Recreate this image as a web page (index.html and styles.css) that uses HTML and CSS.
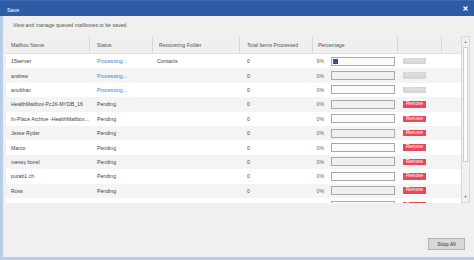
FILE: index.html
```html
<!DOCTYPE html>
<html lang="en">
<head>
    <meta charset="UTF-8">
    <title>Save</title>
    <link rel="stylesheet" href="styles.css">
</head>
<body>
    <div class="window">
        <div class="titlebar">
            <span class="title">Save</span>
            <svg class="close" width="5" height="5" viewBox="0 0 5 5">
                <path d="M0.5 0.5 L4.5 4.5 M4.5 0.5 L0.5 4.5" stroke="#ffffff" stroke-width="1.2"/>
            </svg>
        </div>

        <div class="content">
            <p class="desc">View and manage queued mailboxes to be saved.</p>

            <div class="grid">
                <div class="table">
                    <div class="row head">
                        <div class="c c-name">Mailbox Name</div>
                        <div class="c c-status">Status</div>
                        <div class="c c-folder">Recovering Folder</div>
                        <div class="c c-total">Total Items Processed</div>
                        <div class="c c-pct">Percentage</div>
                        <div class="c c-act"></div>
                        <div class="c c-fill"></div>
                    </div>
                    <div class="body" id="rows"></div>
                </div>
                <div class="scrollbar">
                    <div class="arrow">&#9650;</div>
                    <div class="track"><div class="thumb"></div></div>
                    <div class="arrow">&#9660;</div>
                </div>
            </div>

            <div class="footer">
                <button class="stop">Stop All</button>
            </div>
        </div>
    </div>

    <script>
        // queued mailboxes
        const mailboxes = [
            { name: '15server', status: 'Processing...', folder: 'Contacts', pct: 9, busy: true },
            { name: 'andrew', status: 'Processing...', folder: '', pct: 0, busy: true },
            { name: 'anubhav', status: 'Processing...', folder: '', pct: 0, busy: true },
            { name: 'HealthMailbox-Pc16-MYDB_16', status: 'Pending', folder: '', pct: 0 },
            { name: 'In-Place Archive -HealthMailbox...', status: 'Pending', folder: '', pct: 0 },
            { name: 'Jesse Ryder', status: 'Pending', folder: '', pct: 0 },
            { name: 'Marco', status: 'Pending', folder: '', pct: 0 },
            { name: 'messy lionel', status: 'Pending', folder: '', pct: 0 },
            { name: 'purab1 ch', status: 'Pending', folder: '', pct: 0 },
            { name: 'Ross', status: 'Pending', folder: '', pct: 0 },
            { name: 'Sachin', status: 'Pending', folder: '', pct: 0 }
        ];

        const rows = document.getElementById('rows');

        mailboxes.forEach(m => {
            const row = document.createElement('div');
            row.className = 'row';
            row.innerHTML = `
                <div class="c c-name">${m.name}</div>
                <div class="c c-status ${m.busy ? 'busy' : ''}">${m.status}</div>
                <div class="c c-folder">${m.folder}</div>
                <div class="c c-total">0</div>
                <div class="c c-pct">
                    <span class="pct-text">${m.pct}%</span>
                    <span class="bar"><span class="bar-fill" style="width: ${m.pct}%"></span></span>
                </div>
                <div class="c c-act">
                    <span class="remove ${m.busy ? 'disabled' : ''}">Remove</span>
                </div>`;
            rows.appendChild(row);
        });
    </script>
</body>
</html>
```

FILE: styles.css
```css
* {
    box-sizing: border-box;
}

body {
    margin: 0;
    font-family: 'Liberation Sans', Arial, sans-serif;
    font-size: 5.2px;
    color: #444;
    background: #f0f0f0;
}

.window {
    width: 474px;
    height: 260px;
    display: flex;
    flex-direction: column;
    background: #f0f0f0;
}

.titlebar {
    height: 16px;
    background: #2d5ca5;
    border-top: 1px solid #3b6cb5;
    display: flex;
    align-items: center;
    justify-content: space-between;
    padding: 2px 6px 0 7px;
}

.title {
    color: #ffffff;
    font-size: 5.4px;
}

.close {
    display: block;
    margin-bottom: 2px;
}

.content {
    flex: 1;
    display: flex;
    flex-direction: column;
    border-left: 3px solid #b9cde8;
    border-bottom: 3px solid #b9cde8;
    padding: 5px 4px 0 3px;
}

.desc {
    margin: 0 0 7px 7px;
    line-height: 8px;
    color: #555;
}

.grid {
    display: flex;
    height: 167px;
    background: #ffffff;
}

.table {
    width: 455px;
    display: flex;
    flex-direction: column;
}

.row {
    display: flex;
    height: 14.4px;
    align-items: center;
}

.row:nth-child(even) {
    background: #f4f4f4;
}

.head {
    height: 18px;
    background: #efefef;
    border-bottom: 1px solid #e2e2e2;
    color: #555;
}

.body {
    height: 149px;
    overflow: hidden;
}

.c {
    height: 100%;
    display: flex;
    align-items: center;
    padding-left: 5px;
    white-space: nowrap;
    overflow: hidden;
}

.head .c {
    border-right: 1px solid #d7d7d7;
}

.head .c-fill {
    border-right: none;
}

.c-name { width: 84px; }
.c-status { width: 63px; padding-left: 7px; }
.c-folder { width: 87px; padding-left: 4px; }
.c-total { width: 73px; padding-left: 7px; }
.c-pct { width: 85px; padding-left: 2px; }
.c-act { width: 44px; }
.c-fill { width: 19px; }

.head .c-folder { padding-left: 6px; }
.head .c-pct { padding-left: 5px; }

.busy {
    color: #3a7fd8;
}

.pct-text {
    width: 9px;
    text-align: right;
    color: #666;
}

.bar {
    width: 64px;
    height: 9px;
    margin-left: 7px;
    border: 1px solid #a9a9a9;
    background: rgba(0, 0, 0, 0.015);
    padding: 1px;
    display: flex;
}

.bar-fill {
    display: block;
    height: 100%;
    background: #2c4f9e;
}

.remove {
    display: block;
    width: 23px;
    height: 6.5px;
    line-height: 6.5px;
    text-align: center;
    font-size: 4.6px;
    color: #ffffff;
    background: #e9475a;
}

.remove.disabled {
    background: #d6d6d6;
    color: #ebebeb;
}

.scrollbar {
    width: 9px;
    display: flex;
    flex-direction: column;
    border: 1px solid #dadada;
    background: #f0f0f0;
}

.arrow {
    height: 10px;
    font-size: 3.5px;
    color: #666;
    display: flex;
    align-items: center;
    justify-content: center;
}

.track {
    flex: 1;
    padding: 0 1px;
}

.thumb {
    height: 115px;
    background: #fbfbfb;
    border: 1px solid #cfcfcf;
}

.footer {
    flex: 1;
    display: flex;
    justify-content: flex-end;
    align-items: flex-start;
    padding-top: 35px;
}

.stop {
    width: 37px;
    height: 12px;
    margin-right: 5px;
    padding: 0;
    font-family: 'Liberation Sans', Arial, sans-serif;
    font-size: 5.4px;
    color: #333;
    background: #d8d8d8;
    border: 1px solid #b3b3b3;
    border-radius: 0;
}
```
